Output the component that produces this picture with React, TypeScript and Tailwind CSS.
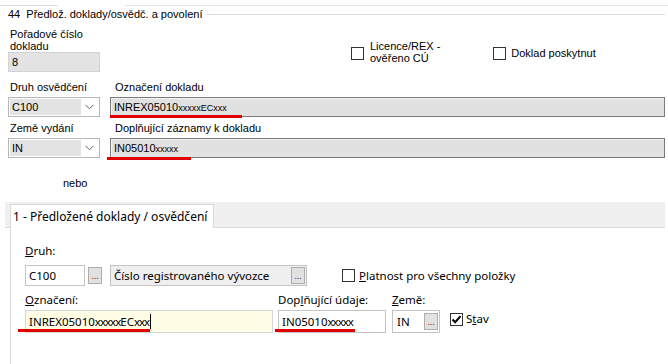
import React from "react";

const top = "font-['Liberation_Sans',Arial,sans-serif] text-[11px] text-black";
const seg = "font-['Noto_Sans',sans-serif] text-[11.5px] text-black";

function RedLine({ className }: { className: string }) {
  return <div className={"absolute h-[3px] bg-[#e30000] " + className} />;
}

function Check({ checked }: { checked?: boolean }) {
  return (
    <div className="w-[13px] h-[13px] shrink-0 border border-[#333] bg-white flex items-center justify-center">
      {checked && (
        <svg width="11" height="11" viewBox="0 0 11 11">
          <path d="M1.5 5.5 L4.2 8.2 L9.5 2.2" fill="none" stroke="#000" strokeWidth="2" />
        </svg>
      )}
    </div>
  );
}

function Combo({ value }: { value: string }) {
  return (
    <div className="w-[92px] h-[20px] border border-[#b8b8b8] bg-white flex items-center p-[1px]">
      <div className="w-[71px] h-full bg-[#e3e3e3] flex items-center pl-[2px]">{value}</div>
      <div className="flex-1 flex items-center justify-center">
        <svg width="9" height="6" viewBox="0 0 9 6">
          <path d="M0.5 0.8 L4.5 4.8 L8.5 0.8" fill="none" stroke="#606060" strokeWidth="1" />
        </svg>
      </div>
    </div>
  );
}

function BigInput({ main, small }: { main: string; small: string }) {
  return (
    <div className="w-[555px] h-[20px] border border-[#7a7a7a] shadow-[inset_1px_1px_0_#f4f4f4] bg-[#e1e1e1] flex items-end pl-[3px] pb-[2px] leading-[14px]">
      <span>{main}</span>
      <span className="text-[9px] leading-[11px]">{small}</span>
    </div>
  );
}

function Dots() {
  return (
    <div className="w-[14px] h-[17px] border border-[#adadad] bg-[#e1e1e1] flex items-end justify-center pb-[3px] text-[9px] leading-[9px] text-[#333]">
      ...
    </div>
  );
}

export default function App() {
  return (
    <div className="w-[668px] h-[364px] bg-white overflow-hidden">
      <div className={top}>
        {/* cut-off lines above */}
        <div className="h-[6px] flex items-end">
          <div className="w-[58px] h-px bg-[#dedede]" />
          <div className="w-[67px]" />
          <div className="flex-1 h-px bg-[#e4e4e4]" />
        </div>
        <div className="h-[16px] flex items-center pl-[8px]">
          <span className="whitespace-pre">44  Předlož. doklady/osvědč. a povolení</span>
          <div className="flex-1 h-px bg-[#dcdcdc] ml-[4px] mr-[3px]" />
        </div>

        <div className="flex pl-[8px]">
          <div className="w-[92px]">
            <div className="mt-[6px] pl-[2px] leading-[12px]">
              Pořadové číslo
              <br />
              dokladu
            </div>
            <div className="w-[92px] h-[20px] border border-[#d2d2d2] bg-[#e3e3e3] flex items-center pl-[3px]">8</div>
          </div>
          <div className="ml-[251px] mt-[18px] flex">
            <div className="mt-[7px]"><Check /></div>
            <div className="ml-[6px] leading-[12px]">
              Licence/REX -
              <br />
              ověřeno CÚ
            </div>
            <div className="mt-[7px] ml-[53px]"><Check /></div>
            <div className="ml-[5px] mt-[7px] leading-[12px]">Doklad poskytnut</div>
          </div>
        </div>

        <div className="flex pl-[8px] mt-[9px]">
          <div className="w-[92px]">
            <div className="pl-[2px] leading-[12px]">Druh osvědčení</div>
            <div className="mt-[4px]"><Combo value="C100" /></div>
          </div>
          <div className="ml-[10px]">
            <div className="pl-[5px] leading-[12px]">Označení dokladu</div>
            <div className="mt-[4px] relative">
              <BigInput main="INREX05010" small="xxxxxECxxx" />
              <RedLine className="left-[0px] bottom-[-1px] w-[132px]" />
            </div>
          </div>
        </div>

        <div className="flex pl-[8px] mt-[5px]">
          <div className="w-[92px]">
            <div className="pl-[2px] leading-[12px]">Země vydání</div>
            <div className="mt-[4px]"><Combo value="IN" /></div>
          </div>
          <div className="ml-[10px]">
            <div className="pl-[5px] leading-[12px]">Doplňující záznamy k dokladu</div>
            <div className="mt-[4px] relative">
              <BigInput main="IN05010" small="xxxxx" />
              <RedLine className="left-[-3px] bottom-[-2px] w-[84px]" />
            </div>
          </div>
        </div>

        <div className="pl-[63px] mt-[19px] leading-[12px]">nebo</div>
      </div>

      <div className={seg + " mt-[13px]"}>
        {/* tab strip */}
        <div className="ml-[5px] w-[660px] h-[26px] bg-[#f0f0f0] border-b border-[#d9d9d9] flex items-end">
          <div className="ml-[5px] w-[204px] h-[24px] bg-white border border-b-0 border-[#d9d9d9] flex items-center pl-[2px] mb-[-1px] text-[12px]">
            1 - Předložené doklady / osvědčení
          </div>
        </div>

        <div className="ml-[10px] border-l border-[#d9d9d9] h-[140px] pl-[14px]">
          <div className="pt-[15px] leading-[16px]"><u>D</u>ruh:</div>
          <div className="flex items-center mt-[6px] h-[21px]">
            <div className="w-[60px] h-[21px] border border-[#c4c4c4] bg-white flex items-center pl-[3px]">C100</div>
            <div className="ml-[3px]"><Dots /></div>
            <div className="ml-[8px] w-[197px] h-[21px] border border-[#c4c4c4] bg-[#efefef] flex items-center pl-[3px] pr-[1px]">
              <span className="flex-1">Číslo registrovaného vývozce</span>
              <Dots />
            </div>
            <div className="ml-[35px]"><Check /></div>
            <div className="ml-[4px]"><u>P</u>latnost pro všechny položky</div>
          </div>

          <div className="flex mt-[6px] leading-[16px]">
            <div className="w-[253px]"><u>O</u>značení:</div>
            <div className="w-[114px]">Dop<u>l</u>ňující údaje:</div>
            <div><u>Z</u>emě:</div>
          </div>
          <div className="flex items-center mt-[2px]">
            <div className="relative">
              <div className="w-[248px] h-[23px] border border-[#d6d6d6] bg-[#fffde6] flex items-center pl-[3px]">
                <span>INREX05010</span>
                <span className="tracking-[-1px]">xxxxx</span>
                <span>EC</span>
                <span className="tracking-[-1px]">xxx</span>
                <span className="w-px h-[15px] bg-black ml-[1px]" />
              </div>
              <RedLine className="left-[-7px] bottom-[1px] w-[132px]" />
            </div>
            <div className="relative ml-[5px]">
              <div className="w-[108px] h-[23px] border border-[#c4c4c4] bg-white flex items-center pl-[3px]">
                <span>IN05010</span>
                <span className="tracking-[-1px]">xxxxx</span>
              </div>
              <RedLine className="left-[-3px] bottom-[1px] w-[80px]" />
            </div>
            <div className="ml-[6px] w-[48px] h-[23px] border border-[#c4c4c4] bg-white flex items-center pl-[4px] pr-[1px]">
              <span className="flex-1">IN</span>
              <Dots />
            </div>
            <div className="ml-[10px] mt-[-5px]"><Check checked /></div>
            <div className="ml-[3px] mt-[-6px]">S<u>t</u>av</div>
          </div>
        </div>
      </div>
    </div>
  );
}
